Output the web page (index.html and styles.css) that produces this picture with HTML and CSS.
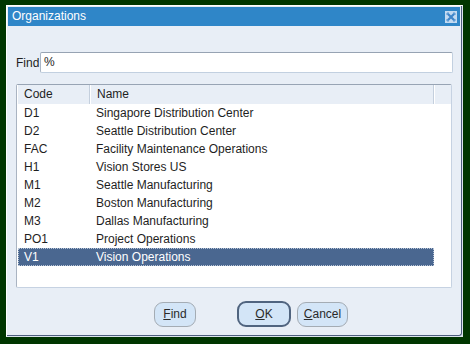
FILE: index.html
```html
<!DOCTYPE html>
<html>
<head>
<meta charset="utf-8">
<link rel="stylesheet" href="styles.css">
</head>
<body>
<div class="frame">
  <div class="win">
    <div class="titlebar">
      <span class="title">Organizations</span>
      <span class="close">
        <svg width="12" height="12" viewBox="0 0 12 12">
          <rect x="0" y="0" width="12" height="12" fill="#c3daf1"/>
          <path d="M3 3 L9 9 M9 3 L3 9" stroke="#3f86c9" stroke-width="2.2" stroke-linecap="square"/>
          <path d="M2 2 h2 M2 2 v2 M10 2 h-2 M10 2 v2 M2 10 h2 M2 10 v-2 M10 10 h-2 M10 10 v-2" stroke="#6aa3d8" stroke-width="1"/>
        </svg>
      </span>
    </div>
    <div class="content">
      <div class="findrow">
        <label class="findlabel">Find</label>
        <div class="input">%</div>
      </div>
      <div class="table">
        <div class="thead">
          <div class="th">Code</div>
          <div class="th">Name</div>
          <div class="th filler"></div>
        </div>
        <div class="tbody">
          <div class="row"><span class="c">D1</span><span class="n">Singapore Distribution Center</span></div>
          <div class="row"><span class="c">D2</span><span class="n">Seattle Distribution Center</span></div>
          <div class="row"><span class="c">FAC</span><span class="n">Facility Maintenance Operations</span></div>
          <div class="row"><span class="c">H1</span><span class="n">Vision Stores US</span></div>
          <div class="row"><span class="c">M1</span><span class="n">Seattle Manufacturing</span></div>
          <div class="row"><span class="c">M2</span><span class="n">Boston Manufacturing</span></div>
          <div class="row"><span class="c">M3</span><span class="n">Dallas Manufacturing</span></div>
          <div class="row"><span class="c">PO1</span><span class="n">Project Operations</span></div>
          <div class="row selected"><span class="c">V1</span><span class="n">Vision Operations</span></div>
        </div>
      </div>
      <div class="buttons">
        <button class="btn btn-find"><u>F</u>ind</button>
        <button class="btn btn-ok"><u>O</u>K</button>
        <button class="btn btn-cancel"><u>C</u>ancel</button>
      </div>
    </div>
  </div>
</div>
</body>
</html>
```

FILE: styles.css
```css
html, body {
  margin: 0;
  padding: 0;
}
body {
  background: #003600;
  width: 470px;
  height: 344px;
  overflow: hidden;
  padding-top: 5px;
  padding-left: 6px;
  box-sizing: border-box;
  font-family: "Liberation Sans", Arial, sans-serif;
  font-size: 12px;
  color: #1e1e1e;
}
.frame {
  width: 457px;
  height: 332px;
  box-sizing: border-box;
  border-top: 1px solid #ffffff;
  border-left: 1px solid #ffffff;
  border-right: 1px solid #dce4ee;
  border-bottom: 1px solid #dce4ee;
  background: #e8eef6;
}
.win {
  height: 100%;
  box-sizing: border-box;
  padding: 1px 1px 0 1px;
  border-right: 1px solid #4e5f7e;
  border-bottom: 1px solid #4e5f7e;
  border-bottom-right-radius: 3px;
  display: flex;
  flex-direction: column;
}
.titlebar {
  height: 19px;
  background: #2f86c8;
  display: flex;
  justify-content: space-between;
  align-items: flex-start;
}
.title {
  color: #ffffff;
  line-height: 19px;
  padding-left: 4px;
}
.close {
  margin-top: 4px;
  margin-right: 3px;
  width: 12px;
  height: 12px;
  display: block;
}
.close svg {
  display: block;
}
.content {
  padding: 26px 7px 0 8px;
  display: flex;
  flex-direction: column;
}
.findrow {
  display: flex;
  align-items: center;
  gap: 2px;
  height: 21px;
}
.findlabel {
  width: 22px;
  color: #1e1e1e;
}
.input {
  flex: 1;
  height: 21px;
  box-sizing: border-box;
  background: #ffffff;
  border: 1px solid #c2d0e0;
  border-top-color: #97a3b3;
  border-left-color: #aab6c6;
  border-radius: 2px;
  padding-left: 3px;
  line-height: 19px;
}
.table {
  margin-top: 11px;
  width: 436px;
  height: 204px;
  box-sizing: border-box;
  border: 1px solid #c6d2e2;
  border-top-color: #98a4b4;
  border-left-color: #aab4c2;
  border-radius: 2px;
  background: #ffffff;
  display: flex;
  flex-direction: column;
}
.thead {
  display: grid;
  grid-template-columns: 73px 344px 1fr;
  height: 19px;
  background: #e8eef6;
}
.th {
  line-height: 19px;
  padding-left: 6px;
  border-left: 1px solid #ffffff;
  border-right: 1px solid #c4cfdd;
}
.th.filler {
  border-right: none;
}
.tbody {
  display: flex;
  flex-direction: column;
}
.row {
  display: grid;
  grid-template-columns: 72px 344px;
  width: 416px;
  margin-left: 1px;
  height: 18px;
  line-height: 18px;
  box-sizing: border-box;
}
.row .c {
  padding-left: 6px;
}
.row .n {
  padding-left: 6px;
}
.row.selected {
  background: #4a6790;
  color: #ffffff;
  outline: 1px dotted #b8c4d6;
  outline-offset: -1px;
}
.buttons {
  margin-top: 14px;
  display: flex;
  height: 25px;
  padding-left: 138px;
}
.btn {
  height: 25px;
  box-sizing: border-box;
  background: #d3e5f7;
  border: 1px solid #a4acb4;
  border-radius: 9px;
  font-family: "Liberation Sans", Arial, sans-serif;
  font-size: 12px;
  color: #2a2a2a;
  padding: 0;
  margin: 0;
  line-height: 23px;
}
.btn u {
  text-underline-offset: 1px;
}
.btn-find {
  width: 42px;
}
.btn-ok {
  width: 54px;
  margin-left: 41px;
  border: 2px solid #50647f;
  line-height: 21px;
  margin-top: -1px;
  height: 26px;
}
.btn-cancel {
  width: 51px;
  margin-left: 6px;
}
```
